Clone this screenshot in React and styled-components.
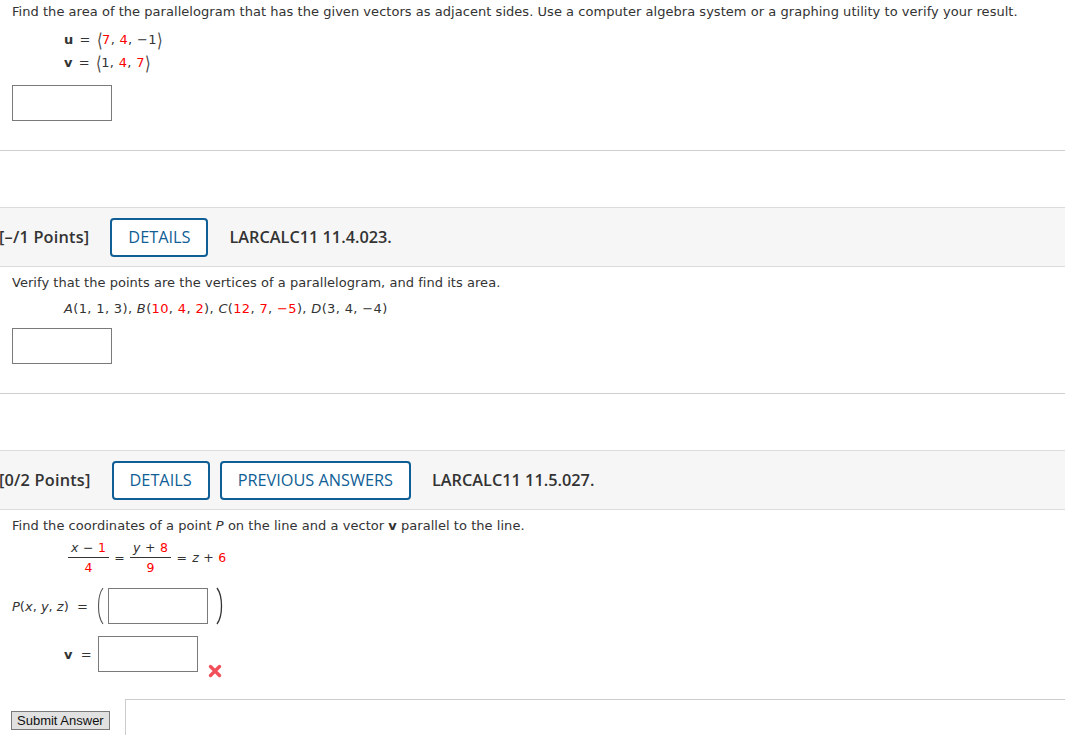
import React from "react";
import styled, { createGlobalStyle } from "styled-components";

const Global = createGlobalStyle`
  html, body { margin: 0; padding: 0; background: #fff; }
  body {
    font-family: Verdana, "DejaVu Sans", sans-serif;
    font-size: 13px;
    color: #333;
    overflow: hidden;
  }
`;

const Page = styled.div`
  width: 1065px;
  height: 735px;
  overflow: hidden;
`;

const Body = styled.div`
  padding: ${(p) => p.$pad || "0"} 0 0 12px;
`;

const Prompt = styled.div`
  line-height: 16px;
  height: 16px;
  white-space: nowrap;
  letter-spacing: 0.04px;
`;

const MathBlock = styled.div`
  margin-left: 52px;
  margin-top: ${(p) => p.$mt || "12px"};
  display: flex;
  flex-direction: column;
  gap: ${(p) => p.$gap || "7px"};
`;

const MathRow = styled.div`
  line-height: 16px;
  height: 16px;
  white-space: nowrap;
  letter-spacing: ${(p) => p.$ls || "0"};
`;

const Bold = styled.b`
  font-weight: bold;
`;

const Red = styled.span`
  color: #f00;
`;

const It = styled.i`
  font-style: italic;
`;

const Eq = styled.span`
  margin: 0 6px;
`;

const Bracket = styled.span`
  display: inline-block;
  font-family: "DejaVu Sans", serif;
  font-size: 19px;
  line-height: 16px;
  font-weight: 200;
  color: #444;
  transform: scaleX(0.75);
  vertical-align: top;
  margin: 0 -1px;
`;

const AnswerBox = styled.div`
  width: ${(p) => p.$w || "98px"};
  height: 34px;
  border: 1px solid #7a7a7a;
  background: #fff;
  margin-top: ${(p) => p.$mt || "0"};
`;

const Divider = styled.hr`
  border: none;
  border-top: 1px solid #cfcfcf;
  margin: ${(p) => p.$mt} 0 0 0;
  height: 0;
`;

const Header = styled.div`
  margin-top: 56px;
  height: 58px;
  background: #f6f6f6;
  border-top: 1px solid #dcdcdc;
  border-bottom: 1px solid #dcdcdc;
  display: flex;
  align-items: center;
  font-family: "Open Sans", sans-serif;
  font-size: 16.3px;
  color: #333;
`;

const Points = styled.span`
  font-weight: 600;
  margin-left: -1px;
  margin-right: ${(p) => p.$mr || "21px"};
  white-space: nowrap;
  letter-spacing: 0.2px;
`;

const HeadButton = styled.button`
  font-family: "Open Sans", sans-serif;
  font-size: 16.3px;
  color: #0f5e95;
  background: #fff;
  border: 2px solid #0f5e95;
  border-radius: 4px;
  height: 39px;
  padding: 0 16px;
  margin-right: ${(p) => p.$mr || "21px"};
  display: flex;
  align-items: center;
  white-space: nowrap;
`;

const Code = styled.span`
  font-weight: 600;
  white-space: nowrap;
  color: #333;
`;

const Frac = styled.span`
  display: inline-flex;
  flex-direction: column;
  align-items: stretch;
  text-align: center;
  vertical-align: middle;
`;

const Num = styled.span`
  line-height: 15px;
  padding: 0 3px 2px;
  border-bottom: 1px solid #333;
`;

const Den = styled.span`
  line-height: 15px;
  padding-top: 2px;
`;

const FracRow = styled.div`
  margin-left: 56px;
  margin-top: 6px;
  display: flex;
  align-items: center;
  font-size: 12.5px;
  white-space: nowrap;
  letter-spacing: 0.3px;
`;

const FracEq = styled.span`
  margin: 0 5px;
`;

const FieldRow = styled.div`
  display: flex;
  align-items: center;
  margin-top: ${(p) => p.$mt || "0"};
  margin-left: ${(p) => p.$ml || "0"};
  white-space: nowrap;
`;

const FieldLabel = styled.span`
  display: inline-block;
  width: ${(p) => p.$w};
`;

const Paren = styled.svg`
  display: block;
  margin: ${(p) => p.$m};
`;

const Cross = styled.svg`
  display: block;
  margin-left: 10px;
  align-self: flex-end;
  margin-bottom: -6px;
`;

const Footer = styled.div`
  margin-top: 27px;
  display: flex;
  align-items: flex-start;
`;

const Submit = styled.button`
  font-family: Arial, "Liberation Sans", sans-serif;
  font-size: 13px;
  color: #111;
  background: #e1e1e1;
  border: 1px solid #7a7a7a;
  height: 19px;
  padding: 0 5px;
  margin: 12px 0 0 -1px;
  line-height: 15px;
`;

const Feedback = styled.div`
  margin-left: 15px;
  flex: 1;
  height: 60px;
  border: 1px solid #cccccc;
  border-right: none;
`;

const LeftParen = () => (
  <Paren width="8" height="38" viewBox="0 0 8 38" $m="0 4px 0 -2px">
    <path d="M7 1 C1 9 1 29 7 37" fill="none" stroke="#555" strokeWidth="1.1" />
  </Paren>
);

const RightParen = () => (
  <Paren width="8" height="38" viewBox="0 0 8 38" $m="0 0 0 8px">
    <path d="M1 1 C7 9 7 29 1 37" fill="none" stroke="#333" strokeWidth="1.3" />
  </Paren>
);

const CrossMark = () => (
  <Cross width="14" height="14" viewBox="0 0 14 14">
    <path d="M2.5 2.5 L11.5 11.5 M11.5 2.5 L2.5 11.5" stroke="#f1505a" strokeWidth="3.4" strokeLinecap="round" />
  </Cross>
);

export default function App() {
  return (
    <Page>
      <Global />
      <Body $pad="4px">
        <Prompt>
          Find the area of the parallelogram that has the given vectors as adjacent sides. Use a computer algebra system or a graphing utility to verify your result.
        </Prompt>
        <MathBlock $mt="12px">
          <MathRow $ls="0.3px">
            <Bold>u</Bold><Eq>=</Eq><Bracket>⟨</Bracket><Red>7</Red>, <Red>4</Red>, −1<Bracket>⟩</Bracket>
          </MathRow>
          <MathRow $ls="0.3px">
            <Bold>v</Bold><Eq>=</Eq><Bracket>⟨</Bracket>1, <Red>4</Red>, <Red>7</Red><Bracket>⟩</Bracket>
          </MathRow>
        </MathBlock>
        <AnswerBox $mt="14px" />
      </Body>
      <Divider $mt="29px" />

      <Header>
        <Points>[–/1 Points]</Points>
        <HeadButton>DETAILS</HeadButton>
        <Code>LARCALC11 11.4.023.</Code>
      </Header>
      <Body $pad="8px">
        <Prompt>Verify that the points are the vertices of a parallelogram, and find its area.</Prompt>
        <MathBlock $mt="10px">
          <MathRow $ls="0.35px">
            <It>A</It>(1, 1, 3), <It>B</It>(<Red>10</Red>, <Red>4</Red>, <Red>2</Red>), <It>C</It>(<Red>12</Red>, <Red>7</Red>, <Red>−5</Red>), <It>D</It>(3, 4, −4)
          </MathRow>
        </MathBlock>
        <AnswerBox $mt="11px" />
      </Body>
      <Divider $mt="29px" />

      <Header>
        <Points $mr="21px">[0/2 Points]</Points>
        <HeadButton $mr="10px">DETAILS</HeadButton>
        <HeadButton>PREVIOUS ANSWERS</HeadButton>
        <Code>LARCALC11 11.5.027.</Code>
      </Header>
      <Body $pad="8px">
        <Prompt>
          Find the coordinates of a point <It>P</It> on the line and a vector <Bold>v</Bold> parallel to the line.
        </Prompt>
        <FracRow>
          <Frac>
            <Num><It>x</It> − <Red>1</Red></Num>
            <Den><Red>4</Red></Den>
          </Frac>
          <FracEq>=</FracEq>
          <Frac>
            <Num><It>y</It> + <Red>8</Red></Num>
            <Den><Red>9</Red></Den>
          </Frac>
          <FracEq>=</FracEq>
          <span><It>z</It> + <Red>6</Red></span>
        </FracRow>
        <FieldRow $mt="12px">
          <FieldLabel $w="86px"><It>P</It>(<It>x</It>, <It>y</It>, <It>z</It>)&nbsp;&nbsp;=</FieldLabel>
          <LeftParen />
          <AnswerBox />
          <RightParen />
        </FieldRow>
        <FieldRow $mt="11px" $ml="52px">
          <FieldLabel $w="34px"><Bold>v</Bold>&nbsp;&nbsp;=</FieldLabel>
          <AnswerBox />
          <CrossMark />
        </FieldRow>
        <Footer>
          <Submit>Submit Answer</Submit>
          <Feedback />
        </Footer>
      </Body>
    </Page>
  );
}
